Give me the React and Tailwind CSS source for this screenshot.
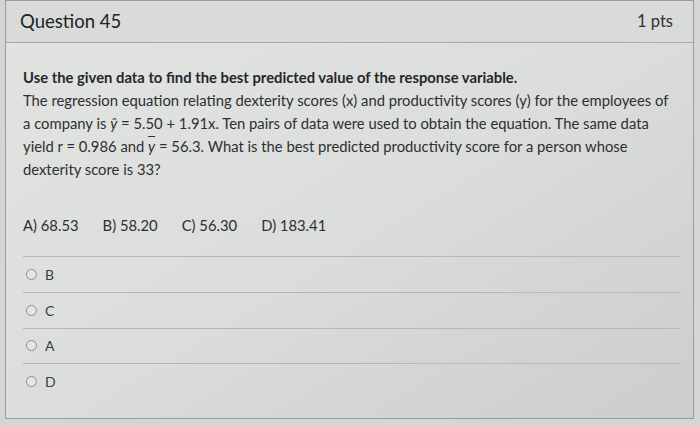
export default function App() {
  const choices = ['B', 'C', 'A', 'D'];

  return (
    <div className="w-[700px] h-[426px] bg-[#d4d6d5] font-['Lato',sans-serif] text-[#2d2f30] overflow-hidden">
      <div className="ml-[5px] w-[689px] h-[419px] border border-[#9a9c9c] bg-linear-to-br from-[#e2e4e2] via-[#dcdedd] to-[#cbcdce]">
        {/* header */}
        <div className="h-[42px] flex items-center justify-between pl-[14px] pr-[20px] border-b border-[#a7a9a8] bg-[#d9dbda]">
          <h2 className="text-[18.5px] text-[#222]">Question 45</h2>
          <span className="text-[16.5px] text-[#333]">1 pts</span>
        </div>

        <div className="pl-[17px] pr-[10px] pt-[23px]">
          <div className="text-[14.8px] leading-[23px] whitespace-nowrap">
            <p className="font-bold text-[#252728]">Use the given data to find the best predicted value of the response variable.</p>
            <p>
              The regression equation relating dexterity scores (x) and productivity scores (y) for the employees of
              <br />
              a company is <span className="inline-block italic">ŷ</span> = 5.50 + 1.91x. Ten pairs of data were used to obtain the equation. The same data
              <br />
              yield r = 0.986 and <span className="inline-block italic overline">y</span> = 56.3. What is the best predicted productivity score for a person whose
              <br />
              dexterity score is 33?
            </p>
          </div>

          <div className="mt-[33px] flex gap-[24px] text-[14.8px]">
            <span>A) 68.53</span>
            <span>B) 58.20</span>
            <span>C) 56.30</span>
            <span>D) 183.41</span>
          </div>

          <div className="mt-[20px] mr-[2px]">
            {choices.map((c) => (
              <div key={c} className="h-[35.7px] flex items-center gap-[8px] pl-[3px] border-t border-[#b6b8b8]">
                <span className="w-[11px] h-[11px] rounded-full border-[1.5px] border-[#8a8c8c] bg-[#e4e6e5]" />
                <span className="text-[14px] text-[#3a3c3d]">{c}</span>
              </div>
            ))}
          </div>
        </div>
      </div>
    </div>
  );
}
